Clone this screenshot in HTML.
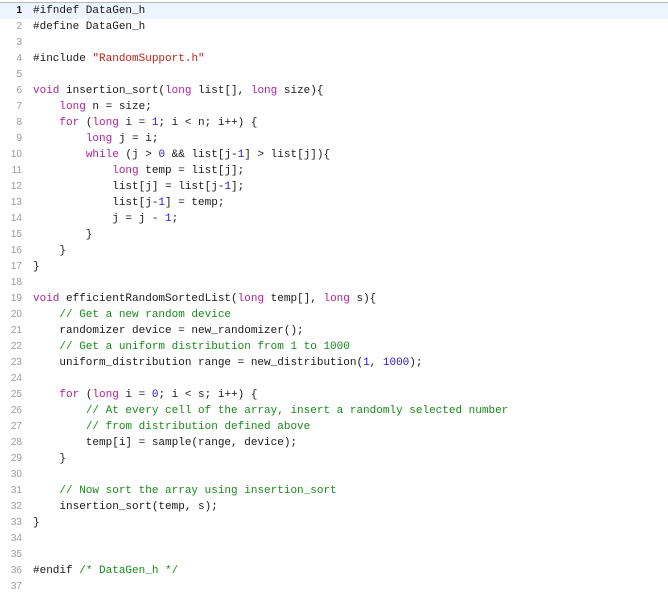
<!DOCTYPE html>
<html><head><meta charset="utf-8"><style>
html,body{margin:0;padding:0;background:#fff;width:668px;height:597px;overflow:hidden}
.top{position:absolute;left:0;top:2px;width:668px;height:1px;background:#b8b8b8}
.hl{position:absolute;left:0;top:3px;width:668px;height:16px;background:#ebf4ff}
.ln{position:absolute;left:0;width:22px;text-align:right;font:10px "Liberation Sans",sans-serif;color:#9a9a9a}
.code{position:absolute;left:33px;top:3px;font:11px/16px "Liberation Mono",monospace;color:#1a1a1a;white-space:pre;margin:0}
.k{color:#b4209e}.s{color:#c4221a}.n{color:#2b16d4}.c{color:#188c18}
</style></head><body>
<div class="top"></div><div class="hl"></div>
<div id="nums"></div>
<pre class="code">#ifndef DataGen_h
#define DataGen_h

#include <span class="s">"RandomSupport.h"</span>

<span class="k">void</span> insertion_sort(<span class="k">long</span> list[], <span class="k">long</span> size){
    <span class="k">long</span> n = size;
    <span class="k">for</span> (<span class="k">long</span> i = <span class="n">1</span>; i &lt; n; i++) {
        <span class="k">long</span> j = i;
        <span class="k">while</span> (j &gt; <span class="n">0</span> &amp;&amp; list[j-<span class="n">1</span>] &gt; list[j]){
            <span class="k">long</span> temp = list[j];
            list[j] = list[j-<span class="n">1</span>];
            list[j-<span class="n">1</span>] = temp;
            j = j - <span class="n">1</span>;
        }
    }
}

<span class="k">void</span> efficientRandomSortedList(<span class="k">long</span> temp[], <span class="k">long</span> s){
    <span class="c">// Get a new random device</span>
    randomizer device = new_randomizer();
    <span class="c">// Get a uniform distribution from 1 to 1000</span>
    uniform_distribution range = new_distribution(<span class="n">1</span>, <span class="n">1000</span>);

    <span class="k">for</span> (<span class="k">long</span> i = <span class="n">0</span>; i &lt; s; i++) {
        <span class="c">// At every cell of the array, insert a randomly selected number</span>
        <span class="c">// from distribution defined above</span>
        temp[i] = sample(range, device);
    }

    <span class="c">// Now sort the array using insertion_sort</span>
    insertion_sort(temp, s);
}


#endif <span class="c">/* DataGen_h */</span>
</pre>
<script>
var h='';for(var i=1;i<=37;i++){h+='<div class="ln" style="top:'+(5+16*(i-1))+'px;'+(i==1?'color:#111;font-weight:bold':'')+'">'+i+'</div>';}
document.getElementById('nums').innerHTML=h;
</script>
</body></html>
